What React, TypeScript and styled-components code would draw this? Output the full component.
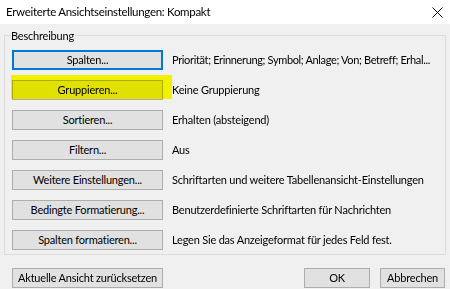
import styled, { createGlobalStyle } from 'styled-components';

const GlobalStyle = createGlobalStyle`
  html, body {
    margin: 0;
    padding: 0;
    background: #f0f0f0;
  }
  body {
    font-family: Lato, "Liberation Sans", sans-serif;
    font-size: 11px;
    letter-spacing: -0.2px;
    color: #000;
  }
`;

const Dialog = styled.div`
  width: 450px;
  height: 289px;
  display: flex;
  flex-direction: column;
  background: #f0f0f0;
  overflow: hidden;
`;

const TitleBar = styled.div`
  height: 24px;
  flex: none;
  background: #fff;
  display: flex;
  align-items: center;
  justify-content: space-between;
  padding: 0 7px 0 6px;
`;

const Title = styled.span`
  font-size: 11.5px;
  letter-spacing: -0.3px;
  line-height: 16px;
`;

const CloseButton = styled.span`
  display: flex;
  width: 12px;
  height: 12px;
  align-items: center;
  justify-content: center;
`;

const GroupBox = styled.fieldset`
  margin: 3px 4px 0 4px;
  padding: 0 7px 4px 7px;
  border: 1px solid #dcdcdc;
  display: flex;
  flex-direction: column;
  gap: 10px;
  min-width: 0;
`;

const Legend = styled.legend`
  padding: 0 1px 0 0;
  margin-left: -1px;
  line-height: 16px;
  margin-bottom: 7px;
  position: relative;
  top: 1px;
`;

const Row = styled.div`
  position: relative;
  display: flex;
  align-items: center;
  gap: 9px;
  height: 20px;
`;

const Button = styled.button<{ $width?: number; $default?: boolean }>`
  width: ${({ $width }) => $width ?? 151}px;
  height: 20px;
  flex: none;
  padding: 0 4px;
  margin: 0;
  background: #e1e1e1;
  border: 1px solid ${({ $default }) => ($default ? '#0078d7' : '#adadad')};
  box-shadow: ${({ $default }) => ($default ? 'inset 0 0 0 1px #0078d7' : 'none')};
  font-family: inherit;
  font-size: inherit;
  letter-spacing: inherit;
  line-height: 16px;
  color: #000;
  white-space: nowrap;
`;

const Description = styled.span<{ $tight?: boolean }>`
  white-space: nowrap;
  overflow: hidden;
  line-height: 16px;
  letter-spacing: ${({ $tight }) => ($tight ? '-0.35px' : 'inherit')};
`;

const Marker = styled.span`
  position: absolute;
  left: -1px;
  top: -5px;
  width: 161px;
  height: 24px;
  background: #ffff00;
  mix-blend-mode: multiply;
  border-radius: 1px;
  pointer-events: none;
`;

const Footer = styled.div`
  display: flex;
  align-items: center;
  padding: 13px 5px 0 12px;
  gap: 10px;
`;

const Spacer = styled.div`
  flex: 1;
`;

const rows = [
  { label: 'Spalten...', text: 'Priorität; Erinnerung; Symbol; Anlage; Von; Betreff; Erhal...', focused: true, tight: true },
  { label: 'Gruppieren...', text: 'Keine Gruppierung', marked: true },
  { label: 'Sortieren...', text: 'Erhalten (absteigend)' },
  { label: 'Filtern...', text: 'Aus' },
  { label: 'Weitere Einstellungen...', text: 'Schriftarten und weitere Tabellenansicht-Einstellungen' },
  { label: 'Bedingte Formatierung...', text: 'Benutzerdefinierte Schriftarten für Nachrichten' },
  { label: 'Spalten formatieren...', text: 'Legen Sie das Anzeigeformat für jedes Feld fest.' },
];

const App = () => (
  <>
    <GlobalStyle />
    <Dialog>
      <TitleBar>
        <Title>Erweiterte Ansichtseinstellungen: Kompakt</Title>
        <CloseButton>
          <svg width="11" height="11" viewBox="0 0 11 11">
            <path d="M0.5 0.5 L10.5 10.5 M10.5 0.5 L0.5 10.5" stroke="#000" strokeWidth="1" />
          </svg>
        </CloseButton>
      </TitleBar>
      <GroupBox>
        <Legend>Beschreibung</Legend>
        {rows.map((row) => (
          <Row key={row.label}>
            <Button $default={row.focused}>{row.label}</Button>
            <Description $tight={row.tight}>{row.text}</Description>
            {row.marked && <Marker />}
          </Row>
        ))}
      </GroupBox>
      <Footer>
        <Button>Aktuelle Ansicht zurücksetzen</Button>
        <Spacer />
        <Button $width={66}>OK</Button>
        <Button $width={65}>Abbrechen</Button>
      </Footer>
    </Dialog>
  </>
);

export default App;
